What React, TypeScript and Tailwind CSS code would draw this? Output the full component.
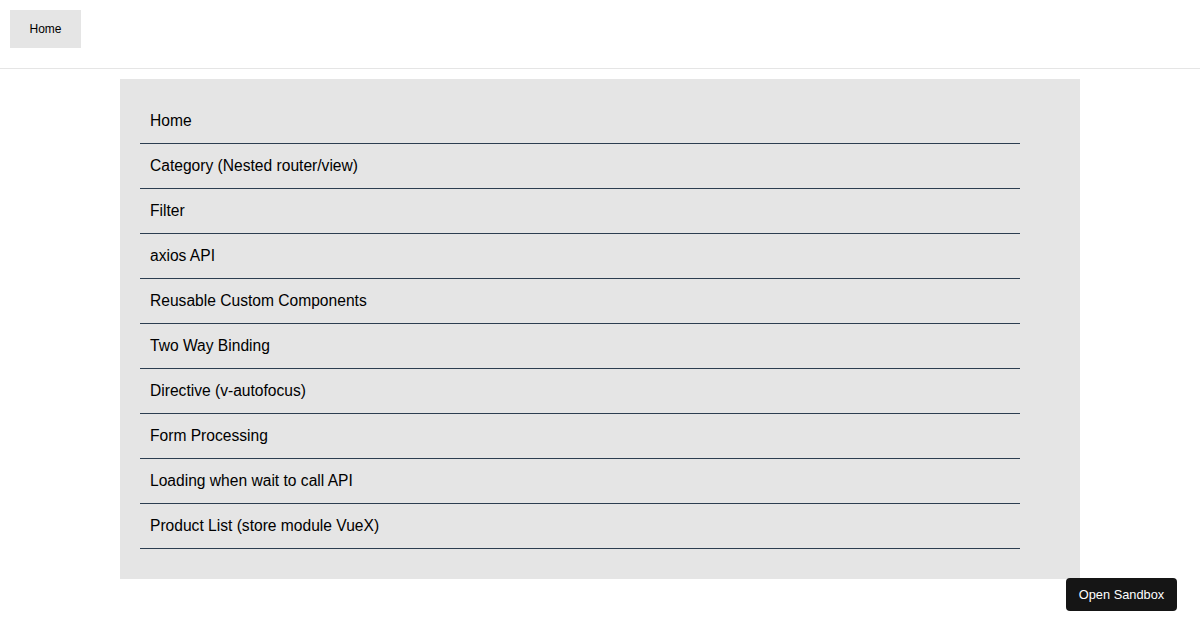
import React from "react";

const items = [
  "Home",
  "Category (Nested router/view)",
  "Filter",
  "axios API",
  "Reusable Custom Components",
  "Two Way Binding",
  "Directive (v-autofocus)",
  "Form Processing",
  "Loading when wait to call API",
  "Product List (store module VueX)",
];

export default function App() {
  return (
    <div
      className="min-h-[630px] bg-white text-black"
      style={{ fontFamily: '"Liberation Sans", Arial, sans-serif' }}
    >
      <header className="pl-[10px] pt-[10px] pb-[20px] border-b border-[#e5e5e5] flex">
        <div className="h-[38px] w-[71px] bg-[#e5e5e5] flex items-center justify-center text-[12px]">
          Home
        </div>
      </header>
      <div className="mx-auto mt-[10px] w-[960px] bg-[#e5e5e5] pt-[20px] pb-[30px] pl-[20px] pr-[60px]">
        <ul>
          {items.map((t) => (
            <li
              key={t}
              className="py-[12px] pl-[10px] text-[15.6px] leading-[20px] border-b border-[#2c3e50]"
            >
              {t}
            </li>
          ))}
        </ul>
      </div>
      <div className="fixed right-[23px] bottom-[19px] h-[33px] w-[111px] rounded-[4px] bg-[#151515] text-white text-[12.8px] flex items-center justify-center">
        Open Sandbox
      </div>
    </div>
  );
}
